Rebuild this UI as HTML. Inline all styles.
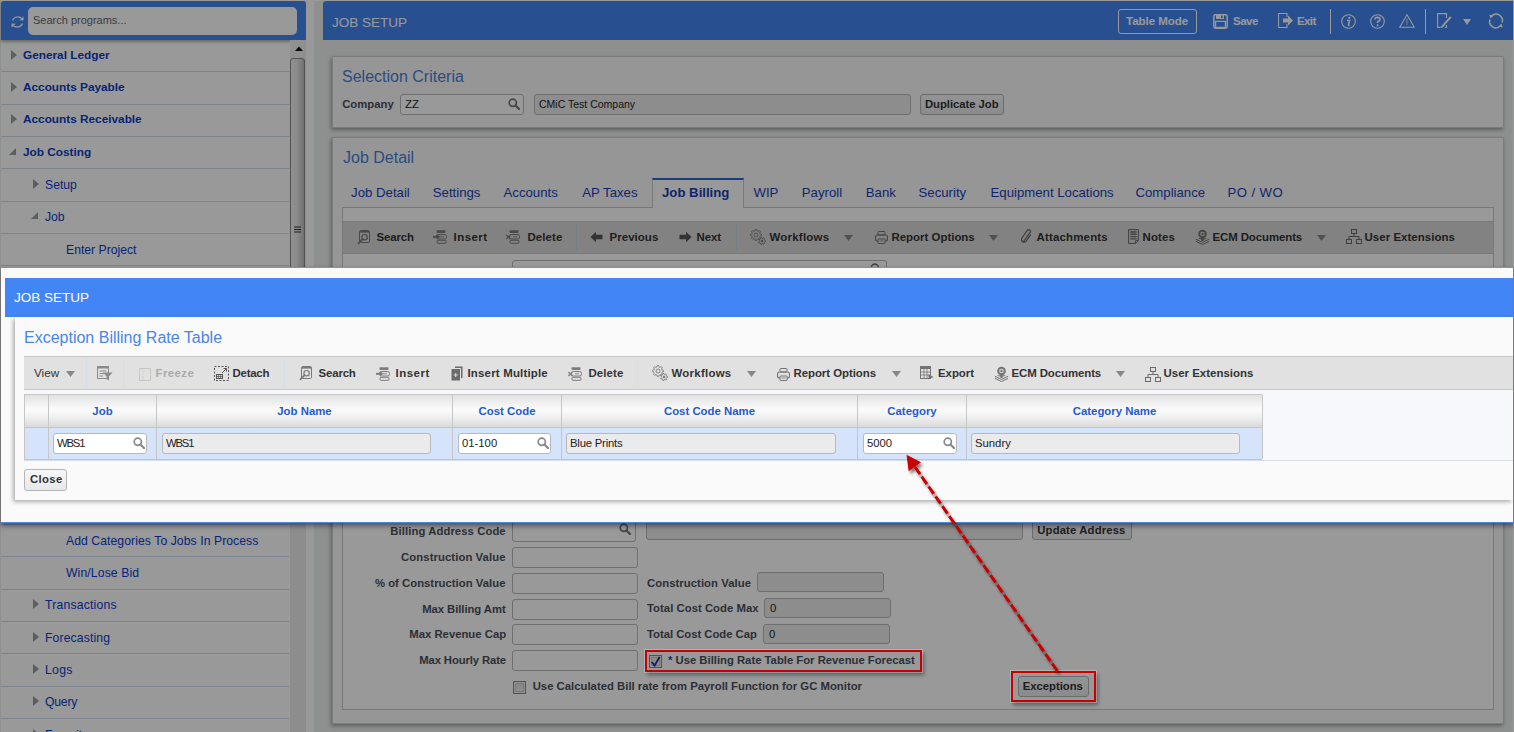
<!DOCTYPE html><html><head><meta charset="utf-8"><style>*{box-sizing:border-box;margin:0;padding:0}
html,body{width:1514px;height:732px;overflow:hidden;background:#edf0ef;font-family:"Liberation Sans",sans-serif;position:relative}
.a{position:absolute}
.t{position:absolute;white-space:nowrap;line-height:1}
.b{font-weight:bold}
#sbh{left:1px;top:1px;width:305px;height:39px;background:#4486f2;border-radius:3px 3px 0 0;box-shadow:0 2px 3px rgba(0,0,0,.3)}
#sbs{left:28px;top:7px;width:269px;height:28px;background:#fff;border-radius:5px}
#sbl{left:1px;top:40px;width:289px;height:692px;background:#fff;overflow:hidden}
.row{position:absolute;left:0;width:288px;border-bottom:1px solid #cddcf2}
.nav{color:#0b3cc9;font-size:12.2px}
.navb{color:#0b3cc9;font-size:11.8px;font-weight:bold}
.tri{position:absolute;width:0;height:0;border-top:5px solid transparent;border-bottom:5px solid transparent;border-left:6px solid #9a9ea2}
.trid{position:absolute;width:0;height:0;border-left:7px solid transparent;border-bottom:7px solid #9a9ea2}
#scr{left:290px;top:40px;width:16px;height:692px;background:#ececec}
#mh{left:323px;top:1px;width:1190px;height:39px;background:#4486f2;border-radius:3px 0 0 0}
.panel{position:absolute;background:#fbfbfb;border:1px solid #cfcfcf;box-shadow:-1px 2px 4px rgba(0,0,0,.35)}
.ptitle{color:#4a7fd6;font-size:16px}
.lbl{color:#4a505a;font-weight:bold;font-size:11.3px}
.inp{position:absolute;background:#fff;border:1px solid #b9b9b9;border-radius:3px}
.ro{background:#ebebeb}
.btn{position:absolute;background:linear-gradient(#f6f7f8,#e6e8eb);border:1px solid #b5b5b5;border-radius:3px;color:#333;font-weight:bold;font-size:11.2px}
.tab{color:#1a3fb5;font-size:13.2px}
.tbi{color:#333;font-weight:bold;font-size:11.45px}
.sep{position:absolute;width:1px;background:#cfd8e4}
#overlay{left:0;top:0;width:1514px;height:732px;background:rgba(0,0,0,.4)}
#modal{left:1px;top:267px;width:1513px;height:256px;background:#fafafa;border-top:1px solid #5b9af0;border-bottom:1px solid #4a86e8;border-right:1px solid #777;box-shadow:0 3px 5px rgba(0,0,0,.45)}
#mdh{left:4px;top:10px;width:1509px;height:39px;background:#4285f4}
.th{position:absolute;top:0;height:32px;border-right:1px solid #c6c6c6;background:linear-gradient(#e2e2e2 0%,#fbfbfb 45%,#f3f3f3 65%,#dadada 100%);color:#1f5bd0;font-weight:bold;font-size:11.4px}
.td{position:absolute;top:32px;height:32px;border-right:1px solid #c6c6c6;border-top:1px solid #c6c6c6;background:#d5e4fb}
</style></head><body>
<div id="sbl" class="a">
<div class="row" style="top:0px;height:32px">
<span class="t navb" style="left:22px;top:10px;letter-spacing:0px">General Ledger</span>
<div class="tri" style="left:10px;top:10px"></div>
</div>
<div class="row" style="top:32px;height:33px">
<span class="t navb" style="left:22px;top:10px;letter-spacing:0px">Accounts Payable</span>
<div class="tri" style="left:10px;top:10px"></div>
</div>
<div class="row" style="top:65px;height:32px">
<span class="t navb" style="left:22px;top:9px;letter-spacing:0px">Accounts Receivable</span>
<div class="tri" style="left:10px;top:9px"></div>
</div>
<div class="row" style="top:97px;height:32px">
<span class="t navb" style="left:22px;top:10px;letter-spacing:0px">Job Costing</span>
<div class="trid" style="left:8px;top:11px"></div>
</div>
<div class="row" style="top:129px;height:33px">
<span class="t nav" style="left:44px;top:10px;letter-spacing:0px">Setup</span>
<div class="tri" style="left:32px;top:10px"></div>
</div>
<div class="row" style="top:162px;height:32px">
<span class="t nav" style="left:44px;top:9px;letter-spacing:0px">Job</span>
<div class="trid" style="left:30px;top:10px"></div>
</div>
<div class="row" style="top:194px;height:32px">
<span class="t nav" style="left:65px;top:10px;letter-spacing:0px">Enter Project</span>
</div>
<div class="row" style="top:226px;height:33px">
<span class="t nav" style="left:65px;top:10px;letter-spacing:0px">Enter Job</span>
</div>
<div class="row" style="top:259px;height:32px">
<span class="t nav" style="left:65px;top:9px;letter-spacing:0px">Job Maintenance</span>
</div>
<div class="row" style="top:291px;height:32px">
<span class="t nav" style="left:65px;top:10px;letter-spacing:0px">Job Status</span>
</div>
<div class="row" style="top:323px;height:33px">
<span class="t nav" style="left:65px;top:10px;letter-spacing:0px">Job Budget</span>
</div>
<div class="row" style="top:356px;height:32px">
<span class="t nav" style="left:65px;top:9px;letter-spacing:0px">Job Forecast</span>
</div>
<div class="row" style="top:388px;height:32px">
<span class="t nav" style="left:65px;top:10px;letter-spacing:0px">Job Templates</span>
</div>
<div class="row" style="top:420px;height:33px">
<span class="t nav" style="left:65px;top:10px;letter-spacing:0px">Copy Job</span>
</div>
<div class="row" style="top:453px;height:32px">
<span class="t nav" style="left:65px;top:9px;letter-spacing:0px">Job Closeout</span>
</div>
<div class="row" style="top:485px;height:32px">
<span class="t nav" style="left:65px;top:10px;letter-spacing:0.07px">Add Categories To Jobs In Process</span>
</div>
<div class="row" style="top:517px;height:33px">
<span class="t nav" style="left:65px;top:10px;letter-spacing:0.12px">Win/Lose Bid</span>
</div>
<div class="row" style="top:550px;height:32px">
<span class="t nav" style="left:44px;top:9px;letter-spacing:0.2px">Transactions</span>
<div class="tri" style="left:32px;top:9px"></div>
</div>
<div class="row" style="top:582px;height:32px">
<span class="t nav" style="left:44px;top:10px;letter-spacing:0.13px">Forecasting</span>
<div class="tri" style="left:32px;top:10px"></div>
</div>
<div class="row" style="top:614px;height:33px">
<span class="t nav" style="left:44px;top:10px;letter-spacing:0.3px">Logs</span>
<div class="tri" style="left:32px;top:10px"></div>
</div>
<div class="row" style="top:647px;height:32px">
<span class="t nav" style="left:44px;top:9px;letter-spacing:-0.2px">Query</span>
<div class="tri" style="left:32px;top:9px"></div>
</div>
<div class="row" style="top:679px;height:32px">
<span class="t nav" style="left:44px;top:10px;letter-spacing:0px">Favorites</span>
<div class="tri" style="left:32px;top:10px"></div>
</div>
</div>
<div id="scr" class="a"></div>
<div id="sbh" class="a">
<svg class="a" style="left:9px;top:14px" width="15" height="14" viewBox="0 0 15 14"><path d="M2.5 5.5 A5.5 5 0 0 1 12.2 4" fill="none" stroke="#fff" stroke-width="1.2"/><path d="M13.5 1.5 L13.5 5.5 L9.5 5.2 Z" fill="#fff"/><path d="M12.5 8.5 A5.5 5 0 0 1 2.8 10" fill="none" stroke="#fff" stroke-width="1.2"/><path d="M1.5 12.5 L1.5 8.5 L5.5 8.8 Z" fill="#fff"/></svg>
</div>
<div id="sbs" class="a"><span class="t" style="left:5px;top:8px;font-size:11px;color:#666">Search programs...</span></div>
<div class="a" style="left:290px;top:40px;width:16px;height:18px;background:#f0f0f0"></div>
<svg class="a" style="left:295px;top:46px;" width="8" height="5" viewBox="0 0 8 5"><path d="M0 5 L4 0.5 L8 5 Z" fill="#111"/></svg>
<div class="a" style="left:290px;top:58px;width:15px;height:330px;border:1px solid #8a8a8a;border-radius:3px;background:linear-gradient(90deg,#f2f2f2 0%,#e8e8e8 45%,#bcbcbc 100%)"></div>
<svg class="a" style="left:294px;top:226px;" width="7" height="7" viewBox="0 0 7 7"><path d="M0 1 H7 M0 3.5 H7 M0 6 H7" stroke="#333" stroke-width="1.1"/></svg>
<div class="a" style="left:306px;top:0;width:8px;height:732px;background:#fff"></div>
<div class="a" style="left:0;top:0;width:1514px;height:1px;background:#fff"></div>
<div class="a" style="left:1513px;top:0;width:1px;height:732px;background:#fff"></div>
<div id="mh" class="a"><span class="t" style="left:9px;top:15px;font-size:13.5px;color:#fff">JOB SETUP</span></div>
<div class="a" style="left:1118px;top:9px;width:79px;height:25px;border:1px solid #fff;border-radius:3px"></div>
<span class="t b" style="left:1126px;top:16px;letter-spacing:-0.028px;font-size:11.5px;color:#fff">Table Mode</span>
<svg class="a" style="left:1213px;top:14px;" width="15" height="15" viewBox="0 0 15 15"><rect x="0.8" y="0.8" width="13.4" height="13.4" rx="1.6" fill="none" stroke="#fff" stroke-width="1.5"/><rect x="3" y="0.8" width="8" height="4.2" fill="#fff"/><rect x="8" y="1.6" width="1.6" height="2.4" fill="#4486f2"/><rect x="2.6" y="7.4" width="9.8" height="6" fill="none" stroke="#fff" stroke-width="1.2"/></svg>
<span class="t b" style="left:1233px;top:16px;letter-spacing:-0.519px;font-size:11.5px;color:#fff">Save</span>
<svg class="a" style="left:1278px;top:13px;" width="16" height="16" viewBox="0 0 16 16"><path d="M9 4 V0.5 H0.5 V14.5 H9 V11" fill="none" stroke="#fff" stroke-width="1.1"/><path d="M5 5.5 H10 V2.5 L15 7.5 L10 12.5 V9.5 H5 Z" fill="#fff"/></svg>
<span class="t b" style="left:1297px;top:16px;letter-spacing:-0.597px;font-size:11.5px;color:#fff">Exit</span>
<div class="a" style="left:1330px;top:9px;width:1px;height:25px;background:#fff"></div>
<svg class="a" style="left:1341px;top:14px;" width="15" height="15" viewBox="0 0 15 15"><circle cx="7.5" cy="7.5" r="6.8" fill="none" stroke="#fff" stroke-width="1.1"/><circle cx="8.3" cy="3.8" r="1.1" fill="#fff"/><path d="M6 6.5 H8.6 L7.4 11 Q7.3 11.6 8.6 11.2" fill="none" stroke="#fff" stroke-width="1.5"/></svg>
<svg class="a" style="left:1370px;top:14px;" width="15" height="15" viewBox="0 0 15 15"><circle cx="7.5" cy="7.5" r="6.8" fill="none" stroke="#fff" stroke-width="1.1"/><path d="M5 5.6 Q5 3.4 7.5 3.4 Q10 3.4 10 5.4 Q10 6.8 7.6 7.8 V9" fill="none" stroke="#fff" stroke-width="1.6"/><circle cx="7.6" cy="11.2" r="1" fill="#fff"/></svg>
<svg class="a" style="left:1399px;top:14px;" width="16" height="14" viewBox="0 0 16 14"><path d="M8 0.8 L15.3 13.3 H0.7 Z" fill="none" stroke="#fff" stroke-width="1.1"/><path d="M8 4.5 V11" stroke="#fff" stroke-width="0.7"/></svg>
<div class="a" style="left:1425px;top:9px;width:1px;height:25px;background:#fff"></div>
<svg class="a" style="left:1437px;top:13px;" width="15" height="16" viewBox="0 0 15 16"><path d="M9.5 5 V0.6 H0.6 V14.4 H3.5 M8 14.4 H9.5 V12" fill="none" stroke="#fff" stroke-width="1.1"/><path d="M4.3 14.6 L13.8 3.8" stroke="#fff" stroke-width="1.9"/></svg>
<svg class="a" style="left:1463px;top:19px;" width="8" height="6" viewBox="0 0 8 6"><path d="M0 0 H8 L4 6 Z" fill="#fff"/></svg>
<svg class="a" style="left:1488px;top:13px;" width="16" height="16" viewBox="0 0 16 16"><path d="M3.6 3.2 A6.2 6.2 0 0 1 14 9.5" fill="none" stroke="#fff" stroke-width="1.4"/><path d="M12.4 12.8 A6.2 6.2 0 0 1 2 6.5" fill="none" stroke="#fff" stroke-width="1.4"/><path d="M1.2 1.8 L5.5 2.2 L2.6 5.6 Z" fill="#fff"/><path d="M14.8 14.2 L10.5 13.8 L13.4 10.4 Z" fill="#fff"/></svg>
<div class="panel" style="left:332px;top:56px;width:1172px;height:72px"></div>
<span class="t ptitle" style="left:342px;top:69px;">Selection Criteria</span>
<span class="t lbl" style="left:342.2px;top:99px;letter-spacing:0.019px;">Company</span>
<div class="inp" style="left:400px;top:94px;width:124px;height:21px"></div>
<span class="t " style="left:405px;top:99px;font-size:11.5px;color:#222">ZZ</span>
<svg class="a" style="left:508px;top:98px;" width="12" height="12" viewBox="0 0 12 12"><circle cx="4.8" cy="4.8" r="3.6" fill="none" stroke="#777" stroke-width="1.7"/><path d="M7.5 7.5 L11 11" stroke="#777" stroke-width="2.2" stroke-linecap="round"/></svg>
<div class="inp ro" style="left:534px;top:94px;width:377px;height:21px"></div>
<span class="t " style="left:539px;top:98.5px;font-size:10.5px;color:#222">CMiC Test Company</span>
<div class="btn" style="left:920px;top:94px;width:84px;height:21px"></div>
<span class="t b" style="left:925px;top:99px;letter-spacing:-0.041px;font-size:11.3px;color:#333">Duplicate Job</span>
<div class="panel" style="left:332px;top:137px;width:1172px;height:587px"></div>
<span class="t ptitle" style="left:343px;top:150px;">Job Detail</span>
<div class="a" style="left:342px;top:207px;width:1152px;height:503px;border:1px solid #c8c8c8;background:#fff"></div>
<div class="a" style="left:652px;top:178px;width:92px;height:30px;border:1px solid #c8c8c8;border-top:2px solid #2a66cc;border-bottom:none;background:#fff"></div>
<span class="t tab" style="left:351.1px;top:186px;">Job Detail</span>
<span class="t tab" style="left:432.8px;top:186px;">Settings</span>
<span class="t tab" style="left:503.5px;top:186px;">Accounts</span>
<span class="t tab" style="left:582.3px;top:186px;">AP Taxes</span>
<span class="t tab b" style="left:662px;top:186px;font-size:13.2px">Job Billing</span>
<span class="t tab" style="left:753.5px;top:186px;">WIP</span>
<span class="t tab" style="left:801.8px;top:186px;">Payroll</span>
<span class="t tab" style="left:865.8px;top:186px;">Bank</span>
<span class="t tab" style="left:918.5px;top:186px;">Security</span>
<span class="t tab" style="left:990.5px;top:186px;">Equipment Locations</span>
<span class="t tab" style="left:1135.5px;top:186px;">Compliance</span>
<span class="t tab" style="left:1227.5px;top:186px;letter-spacing:0.4px">PO / WO</span>
<div class="a" style="left:343px;top:221px;width:1150px;height:33px;background:#d9d9d9;border-top:1px solid #cdcdcd;border-bottom:1px solid #cdcdcd"></div>
<svg class="a" style="left:357px;top:230px;" width="13" height="15" viewBox="0 0 13 15"><rect x="2.5" y="0.5" width="10" height="12" rx="1.2" fill="none" stroke="#7a7a7a" stroke-width="1"/><rect x="3" y="1" width="9" height="1.6" fill="#7a7a7a"/><circle cx="7.6" cy="7.2" r="2.7" fill="none" stroke="#7a7a7a" stroke-width="1.2"/><path d="M5.6 9.2 L1 13.8" stroke="#7a7a7a" stroke-width="1.8"/></svg>
<span class="t tbi" style="left:376.5px;top:232px;letter-spacing:-0.118px;">Search</span>
<svg class="a" style="left:433px;top:230px;" width="15" height="14" viewBox="0 0 15 14"><rect x="3.5" y="0.3" width="9" height="2.6" rx="0.8" fill="#7c7c7c"/><rect x="3.5" y="4.5" width="10" height="4.5" rx="1.8" fill="none" stroke="#7c7c7c" stroke-width="1"/><path d="M7 6.8 H11" stroke="#7c7c7c" stroke-width="0.9"/><rect x="4" y="10.3" width="9" height="3" rx="1" fill="none" stroke="#7c7c7c" stroke-width="1"/><path d="M0 6.8 H4.5" stroke="#7c7c7c" stroke-width="2"/><path d="M4 4 L7.2 6.8 L4 9.6 Z" fill="#7c7c7c"/></svg>
<span class="t tbi" style="left:453.5px;top:232px;letter-spacing:0.484px;">Insert</span>
<svg class="a" style="left:506px;top:230px;" width="15" height="14" viewBox="0 0 15 14"><rect x="3.5" y="0.3" width="9" height="2.6" rx="0.8" fill="#7c7c7c"/><rect x="3.5" y="4.5" width="10" height="4.5" rx="1.8" fill="none" stroke="#7c7c7c" stroke-width="1"/><path d="M7 6.8 H11" stroke="#7c7c7c" stroke-width="0.9"/><rect x="4" y="10.3" width="9" height="3" rx="1" fill="none" stroke="#7c7c7c" stroke-width="1"/><path d="M0.3 5 L4.3 9 M4.3 5 L0.3 9" stroke="#7c7c7c" stroke-width="1.2"/></svg>
<span class="t tbi" style="left:527.5px;top:232px;letter-spacing:0.087px;">Delete</span>
<div class="sep" style="left:576px;top:225px;height:25px;background:#c5d3e4"></div>
<svg class="a" style="left:590px;top:231px;" width="13" height="12" viewBox="0 0 13 12"><path d="M0.5 6 L6 0.8 L6 3.8 L12.5 3.8 L12.5 8.2 L6 8.2 L6 11.2 Z" fill="#555"/></svg>
<span class="t tbi" style="left:609.5px;top:232px;letter-spacing:0.062px;">Previous</span>
<svg class="a" style="left:679px;top:231px;" width="13" height="12" viewBox="0 0 13 12"><path d="M12.5 6 L7 0.8 L7 3.8 L0.5 3.8 L0.5 8.2 L7 8.2 L7 11.2 Z" fill="#555"/></svg>
<span class="t tbi" style="left:696.5px;top:232px;letter-spacing:-0.073px;">Next</span>
<div class="sep" style="left:736px;top:225px;height:25px;background:#c5d3e4"></div>
<svg class="a" style="left:750px;top:229px;" width="16" height="16" viewBox="0 0 16 16"><polygon points="11.46,5.31 11.46,6.69 10.05,7.11 9.65,8.08 10.35,9.37 9.37,10.35 8.08,9.65 7.11,10.05 6.69,11.46 5.31,11.46 4.89,10.05 3.92,9.65 2.63,10.35 1.65,9.37 2.35,8.08 1.95,7.11 0.54,6.69 0.54,5.31 1.95,4.89 2.35,3.92 1.65,2.63 2.63,1.65 3.92,2.35 4.89,1.95 5.31,0.54 6.69,0.54 7.11,1.95 8.08,2.35 9.37,1.65 10.35,2.63 9.65,3.92 10.05,4.89" fill="none" stroke="#7a7a7a" stroke-width="0.9"/><circle cx="6" cy="6" r="2" fill="none" stroke="#7a7a7a" stroke-width="0.9"/><polygon points="15.56,11.48 15.56,12.52 14.48,12.78 14.16,13.45 14.62,14.46 13.82,15.11 12.94,14.43 12.21,14.59 11.71,15.59 10.70,15.36 10.69,14.24 10.10,13.78 9.01,14.01 8.57,13.08 9.43,12.37 9.43,11.63 8.57,10.92 9.01,9.99 10.10,10.22 10.69,9.76 10.70,8.64 11.71,8.41 12.21,9.41 12.94,9.57 13.82,8.89 14.62,9.54 14.16,10.55 14.48,11.22" fill="none" stroke="#7a7a7a" stroke-width="0.9"/><circle cx="12" cy="12" r="1.2" fill="#7a7a7a"/></svg>
<span class="t tbi" style="left:769.5px;top:232px;letter-spacing:0.239px;">Workflows</span>
<svg class="a" style="left:844px;top:235px;" width="9" height="6" viewBox="0 0 9 6"><path d="M0 0 H9 L4.5 6 Z" fill="#888"/></svg>
<svg class="a" style="left:875px;top:231px;" width="13" height="13" viewBox="0 0 13 13"><rect x="3" y="0.5" width="7" height="3.5" rx="0.8" fill="none" stroke="#737373" stroke-width="1"/><rect x="0.5" y="4" width="12" height="6" rx="2" fill="none" stroke="#737373" stroke-width="1.1"/><rect x="3" y="8" width="7" height="4.5" rx="0.5" fill="#e4e4e4" stroke="#737373" stroke-width="1"/><path d="M4.5 10 H8.5" stroke="#737373" stroke-width="0.8"/></svg>
<span class="t tbi" style="left:891.5px;top:232px;letter-spacing:-0.002px;">Report Options</span>
<svg class="a" style="left:989px;top:235px;" width="9" height="6" viewBox="0 0 9 6"><path d="M0 0 H9 L4.5 6 Z" fill="#888"/></svg>
<svg class="a" style="left:1021px;top:229px;" width="11" height="15" viewBox="0 0 11 15"><path d="M2.2 13.2 L9.3 3.2 A1.8 1.8 0 0 0 6.4 1.2 L1 9 A2.6 2.6 0 0 0 5.3 12 L9.8 5.6" fill="none" stroke="#6b6b6b" stroke-width="1.3"/></svg>
<span class="t tbi" style="left:1036.5px;top:232px;letter-spacing:0.195px;">Attachments</span>
<svg class="a" style="left:1128px;top:229px;" width="12" height="15" viewBox="0 0 12 15"><path d="M0.6 0.6 H10.4 V11.5 L7.5 14.4 H0.6 Z" fill="none" stroke="#6b6b6b" stroke-width="1"/><path d="M7.5 14.4 V11.5 H10.4" fill="none" stroke="#6b6b6b" stroke-width="0.9"/><path d="M2.3 3 H8.7 M2.3 5.3 H8.7 M2.3 7.6 H8.7 M2.3 9.9 H8.7" stroke="#6b6b6b" stroke-width="1.4"/></svg>
<span class="t tbi" style="left:1142.5px;top:232px;letter-spacing:0.147px;">Notes</span>
<svg class="a" style="left:1195px;top:229px;" width="15" height="16" viewBox="0 0 15 16"><path d="M0.8 10.2 L7.5 13.4 L14.2 10.2 M0.8 12.3 L7.5 15.5 L14.2 12.3" fill="none" stroke="#737373" stroke-width="1"/><path d="M3 9.5 L7.5 11.6 L12 9.5 L7.5 7.5 Z" fill="#737373" opacity=".7"/><circle cx="7.5" cy="5" r="4.3" fill="#737373"/><circle cx="7.5" cy="5" r="2.3" fill="#dedede"/><circle cx="7.5" cy="5" r="1.2" fill="#737373"/><rect x="6.5" y="8.5" width="2" height="3.5" fill="#737373"/></svg>
<span class="t tbi" style="left:1212.5px;top:232px;letter-spacing:-0.098px;">ECM Documents</span>
<svg class="a" style="left:1317px;top:235px;" width="9" height="6" viewBox="0 0 9 6"><path d="M0 0 H9 L4.5 6 Z" fill="#888"/></svg>
<svg class="a" style="left:1346px;top:229px;" width="16" height="15" viewBox="0 0 16 15"><rect x="5.5" y="0.5" width="5" height="4" fill="none" stroke="#6b6b6b" stroke-width="1"/><path d="M8 4.5 V7.5 M3 7.5 H13 M3 7.5 V10 M13 7.5 V10" stroke="#6b6b6b" stroke-width="1" fill="none"/><rect x="0.5" y="10.5" width="5" height="4" fill="none" stroke="#6b6b6b" stroke-width="1"/><rect x="10.5" y="10.5" width="5" height="4" fill="none" stroke="#6b6b6b" stroke-width="1"/></svg>
<span class="t tbi" style="left:1364.5px;top:232px;letter-spacing:0.055px;">User Extensions</span>
<div class="inp" style="left:512px;top:260px;width:375px;height:21px"></div>
<svg class="a" style="left:870px;top:263px;" width="12" height="12" viewBox="0 0 12 12"><circle cx="4.8" cy="4.8" r="3.6" fill="none" stroke="#777" stroke-width="1.7"/><path d="M7.5 7.5 L11 11" stroke="#777" stroke-width="2.2" stroke-linecap="round"/></svg>
<span class="t lbl" style="left:390.3px;top:525.5px;letter-spacing:0.081px;">Billing Address Code</span>
<div class="inp" style="left:512px;top:520.5px;width:124px;height:21px"></div>
<span class="t lbl" style="left:401.1px;top:551.6px;letter-spacing:0.083px;">Construction Value</span>
<div class="inp" style="left:512px;top:546.6px;width:126px;height:21px"></div>
<span class="t lbl" style="left:374.9px;top:577.8px;letter-spacing:0.028px;">% of Construction Value</span>
<div class="inp" style="left:512px;top:572.8px;width:126px;height:21px"></div>
<span class="t lbl" style="left:422.2px;top:603.5px;letter-spacing:-0.061px;">Max Billing Amt</span>
<div class="inp" style="left:512px;top:598.5px;width:126px;height:21px"></div>
<span class="t lbl" style="left:409.3px;top:629.4px;letter-spacing:0.006px;">Max Revenue Cap</span>
<div class="inp" style="left:512px;top:624.4px;width:126px;height:21px"></div>
<span class="t lbl" style="left:419.2px;top:655.3px;letter-spacing:-0.117px;">Max Hourly Rate</span>
<div class="inp" style="left:512px;top:650.3px;width:126px;height:21px"></div>
<svg class="a" style="left:619px;top:523px;" width="12" height="12" viewBox="0 0 12 12"><circle cx="4.8" cy="4.8" r="3.6" fill="none" stroke="#777" stroke-width="1.7"/><path d="M7.5 7.5 L11 11" stroke="#777" stroke-width="2.2" stroke-linecap="round"/></svg>
<div class="inp ro" style="left:646px;top:520px;width:377px;height:20px"></div>
<div class="btn" style="left:1032px;top:520px;width:100px;height:20px"></div>
<span class="t b" style="left:1037.3px;top:525px;letter-spacing:0.142px;font-size:11.3px;color:#333">Update Address</span>
<span class="t lbl" style="left:647px;top:578px;letter-spacing:0.059px;">Construction Value</span>
<div class="inp ro" style="left:757px;top:572px;width:127px;height:20px"></div>
<span class="t lbl" style="left:647px;top:603px;letter-spacing:0.036px;">Total Cost Code Max</span>
<div class="inp ro" style="left:764px;top:598px;width:127px;height:20px"></div>
<span class="t " style="left:770px;top:603px;font-size:11.3px;color:#222">0</span>
<span class="t lbl" style="left:647px;top:629px;letter-spacing:-0.018px;">Total Cost Code Cap</span>
<div class="inp ro" style="left:763px;top:624px;width:127px;height:20px"></div>
<span class="t " style="left:769px;top:629px;font-size:11.3px;color:#222">0</span>
<div class="a" style="left:649px;top:655px;width:13px;height:13px;border:1px solid #8a8a8a;box-shadow:inset 0 0 0 1px #f4f4f4,inset 0 0 0 2px #c8c8c8;background:linear-gradient(#e4e4e4,#f4f4f4)"></div>
<svg class="a" style="left:650px;top:656px;" width="11" height="11" viewBox="0 0 11 11"><path d="M2.3 6.5 L4.6 9.6 L9.3 1.6" fill="none" stroke="#1e3c9c" stroke-width="1.9" stroke-linecap="round"/></svg>
<span class="t lbl" style="left:668px;top:655px;letter-spacing:-0.006px;"><span style="color:#2a4fc0">*</span> Use Billing Rate Table For Revenue Forecast</span>
<div class="a" style="left:513px;top:681px;width:13px;height:13px;border:1px solid #8a8a8a;box-shadow:inset 0 0 0 1px #f4f4f4,inset 0 0 0 2px #c8c8c8;background:linear-gradient(#d8d8d8,#f4f4f4)"></div>
<span class="t lbl" style="left:532.7px;top:681px;letter-spacing:0.017px;">Use Calculated Bill rate from Payroll Function for GC Monitor</span>
<div class="btn" style="left:1018px;top:676px;width:71px;height:21px"></div>
<span class="t b" style="left:1022.8px;top:681px;letter-spacing:-0.032px;font-size:11.3px;color:#333">Exceptions</span>
<div id="overlay" class="a"></div>
<div id="modal" class="a"><div id="mdh" class="a"><span class="t" style="left:9px;top:13px;font-size:13.5px;color:#fff">JOB SETUP</span></div></div>
<div class="a" style="left:15px;top:317px;width:1498px;height:183px;background:#fafafa;box-shadow:-2px 2px 4px rgba(0,0,0,.3)"></div>
<span class="t " style="left:24px;top:330px;font-size:16px;color:#4a86e8">Exception Billing Rate Table</span>
<div class="a" style="left:24px;top:356px;width:1489px;height:34px;background:#e1e1e1;border-top:1px solid #c9c9c9;border-bottom:1px solid #c9c9c9"></div>
<span class="t " style="left:34px;top:367px;font-size:11.7px;color:#333">View</span>
<svg class="a" style="left:66px;top:371px;" width="9" height="6" viewBox="0 0 9 6"><path d="M0 0 H9 L4.5 6 Z" fill="#888"/></svg>
<div class="sep" style="left:86px;top:357px;height:32px;background:#d3dfec"></div>
<svg class="a" style="left:97px;top:366px;" width="16" height="15" viewBox="0 0 16 15"><rect x="0.5" y="0.5" width="11" height="12" fill="none" stroke="#8a8a8a" stroke-width="1"/><rect x="0.5" y="0.5" width="11" height="2" fill="#8a8a8a"/><path d="M2.5 5 H9.5 M2.5 7.5 H7 M2.5 10 H6" stroke="#8a8a8a" stroke-width="1"/><path d="M6 6.5 H15.5 L11.8 10.5 V14.5 L9.7 13 V10.5 Z" fill="#8a8a8a"/></svg>
<div class="sep" style="left:123px;top:360px;height:27px;background:#d3dfec"></div>
<svg class="a" style="left:139px;top:368px;" width="12" height="13" viewBox="0 0 12 13"><rect x="0.5" y="0.5" width="11" height="12" fill="none" stroke="#c8c8c8" stroke-width="1"/><path d="M4 0.5 V12.5" stroke="#c8c8c8" stroke-width="1" stroke-dasharray="1.5 1"/></svg>
<span class="t tbi" style="left:155.5px;top:368px;letter-spacing:0.404px;color:#aaa">Freeze</span>
<svg class="a" style="left:214px;top:366px;" width="15" height="15" viewBox="0 0 15 15"><rect x="0.5" y="0.5" width="14" height="14" fill="none" stroke="#555" stroke-width="1" stroke-dasharray="2 1.5"/><path d="M8 7 L12.5 2.5 M9.5 2.5 H12.5 V5.5" stroke="#555" stroke-width="1" fill="none"/><rect x="2.5" y="8.5" width="6" height="4" fill="none" stroke="#555" stroke-width="1"/><path d="M2.5 10.5 H8.5 M4.5 8.5 V12.5 M6.5 8.5 V12.5" stroke="#555" stroke-width="0.7"/></svg>
<span class="t tbi" style="left:232.5px;top:368px;letter-spacing:-0.236px;">Detach</span>
<div class="sep" style="left:284px;top:360px;height:27px;background:#d3dfec"></div>
<svg class="a" style="left:299px;top:366px;" width="13" height="15" viewBox="0 0 13 15"><rect x="2.5" y="0.5" width="10" height="12" rx="1.2" fill="none" stroke="#7a7a7a" stroke-width="1"/><rect x="3" y="1" width="9" height="1.6" fill="#7a7a7a"/><circle cx="7.6" cy="7.2" r="2.7" fill="none" stroke="#7a7a7a" stroke-width="1.2"/><path d="M5.6 9.2 L1 13.8" stroke="#7a7a7a" stroke-width="1.8"/></svg>
<span class="t tbi" style="left:318.5px;top:368px;letter-spacing:-0.158px;">Search</span>
<svg class="a" style="left:376px;top:367px;" width="15" height="14" viewBox="0 0 15 14"><rect x="3.5" y="0.3" width="9" height="2.6" rx="0.8" fill="#7c7c7c"/><rect x="3.5" y="4.5" width="10" height="4.5" rx="1.8" fill="none" stroke="#7c7c7c" stroke-width="1"/><path d="M7 6.8 H11" stroke="#7c7c7c" stroke-width="0.9"/><rect x="4" y="10.3" width="9" height="3" rx="1" fill="none" stroke="#7c7c7c" stroke-width="1"/><path d="M0 6.8 H4.5" stroke="#7c7c7c" stroke-width="2"/><path d="M4 4 L7.2 6.8 L4 9.6 Z" fill="#7c7c7c"/></svg>
<span class="t tbi" style="left:395.5px;top:368px;letter-spacing:0.524px;">Insert</span>
<svg class="a" style="left:451px;top:366px;" width="12" height="15" viewBox="0 0 12 15"><path d="M4 0.5 H11.5 V12 H10 V2 H4 Z" fill="#6b6b6b"/><path d="M0.5 3 H9 V14.5 H0.5 Z" fill="#6b6b6b"/><path d="M4.7 7 V11 M2.7 9 H6.7" stroke="#ddd" stroke-width="1"/></svg>
<span class="t tbi" style="left:467.5px;top:368px;letter-spacing:0.192px;">Insert Multiple</span>
<svg class="a" style="left:568px;top:367px;" width="15" height="14" viewBox="0 0 15 14"><rect x="3.5" y="0.3" width="9" height="2.6" rx="0.8" fill="#7c7c7c"/><rect x="3.5" y="4.5" width="10" height="4.5" rx="1.8" fill="none" stroke="#7c7c7c" stroke-width="1"/><path d="M7 6.8 H11" stroke="#7c7c7c" stroke-width="0.9"/><rect x="4" y="10.3" width="9" height="3" rx="1" fill="none" stroke="#7c7c7c" stroke-width="1"/><path d="M0.3 5 L4.3 9 M4.3 5 L0.3 9" stroke="#7c7c7c" stroke-width="1.2"/></svg>
<span class="t tbi" style="left:588.5px;top:368px;letter-spacing:0.107px;">Delete</span>
<div class="sep" style="left:637px;top:360px;height:27px;background:#d3dfec"></div>
<svg class="a" style="left:652px;top:365px;" width="16" height="16" viewBox="0 0 16 16"><polygon points="11.46,5.31 11.46,6.69 10.05,7.11 9.65,8.08 10.35,9.37 9.37,10.35 8.08,9.65 7.11,10.05 6.69,11.46 5.31,11.46 4.89,10.05 3.92,9.65 2.63,10.35 1.65,9.37 2.35,8.08 1.95,7.11 0.54,6.69 0.54,5.31 1.95,4.89 2.35,3.92 1.65,2.63 2.63,1.65 3.92,2.35 4.89,1.95 5.31,0.54 6.69,0.54 7.11,1.95 8.08,2.35 9.37,1.65 10.35,2.63 9.65,3.92 10.05,4.89" fill="none" stroke="#7a7a7a" stroke-width="0.9"/><circle cx="6" cy="6" r="2" fill="none" stroke="#7a7a7a" stroke-width="0.9"/><polygon points="15.56,11.48 15.56,12.52 14.48,12.78 14.16,13.45 14.62,14.46 13.82,15.11 12.94,14.43 12.21,14.59 11.71,15.59 10.70,15.36 10.69,14.24 10.10,13.78 9.01,14.01 8.57,13.08 9.43,12.37 9.43,11.63 8.57,10.92 9.01,9.99 10.10,10.22 10.69,9.76 10.70,8.64 11.71,8.41 12.21,9.41 12.94,9.57 13.82,8.89 14.62,9.54 14.16,10.55 14.48,11.22" fill="none" stroke="#7a7a7a" stroke-width="0.9"/><circle cx="12" cy="12" r="1.2" fill="#7a7a7a"/></svg>
<span class="t tbi" style="left:671.5px;top:368px;letter-spacing:0.264px;">Workflows</span>
<svg class="a" style="left:747px;top:371px;" width="9" height="6" viewBox="0 0 9 6"><path d="M0 0 H9 L4.5 6 Z" fill="#888"/></svg>
<svg class="a" style="left:777px;top:368px;" width="13" height="13" viewBox="0 0 13 13"><rect x="3" y="0.5" width="7" height="3.5" rx="0.8" fill="none" stroke="#737373" stroke-width="1"/><rect x="0.5" y="4" width="12" height="6" rx="2" fill="none" stroke="#737373" stroke-width="1.1"/><rect x="3" y="8" width="7" height="4.5" rx="0.5" fill="#e4e4e4" stroke="#737373" stroke-width="1"/><path d="M4.5 10 H8.5" stroke="#737373" stroke-width="0.8"/></svg>
<span class="t tbi" style="left:793.5px;top:368px;letter-spacing:-0.056px;">Report Options</span>
<svg class="a" style="left:892px;top:371px;" width="9" height="6" viewBox="0 0 9 6"><path d="M0 0 H9 L4.5 6 Z" fill="#888"/></svg>
<svg class="a" style="left:920px;top:366px;" width="14" height="14" viewBox="0 0 14 14"><rect x="0.5" y="0.5" width="10" height="12" fill="none" stroke="#737373" stroke-width="1"/><rect x="0.5" y="0.5" width="10" height="2.5" fill="#737373"/><path d="M0.5 6 H10.5 M0.5 9 H10.5 M4 0.5 V12.5 M7 0.5 V12.5" stroke="#737373" stroke-width="0.8"/><path d="M8.5 8.5 L13.5 11 L8.5 13.5 Z" fill="#737373"/></svg>
<span class="t tbi" style="left:938.0px;top:368px;letter-spacing:-0.052px;">Export</span>
<svg class="a" style="left:994px;top:366px;" width="15" height="16" viewBox="0 0 15 16"><path d="M0.8 10.2 L7.5 13.4 L14.2 10.2 M0.8 12.3 L7.5 15.5 L14.2 12.3" fill="none" stroke="#737373" stroke-width="1"/><path d="M3 9.5 L7.5 11.6 L12 9.5 L7.5 7.5 Z" fill="#737373" opacity=".7"/><circle cx="7.5" cy="5" r="4.3" fill="#737373"/><circle cx="7.5" cy="5" r="2.3" fill="#dedede"/><circle cx="7.5" cy="5" r="1.2" fill="#737373"/><rect x="6.5" y="8.5" width="2" height="3.5" fill="#737373"/></svg>
<span class="t tbi" style="left:1011.5px;top:368px;letter-spacing:-0.098px;">ECM Documents</span>
<svg class="a" style="left:1116px;top:371px;" width="9" height="6" viewBox="0 0 9 6"><path d="M0 0 H9 L4.5 6 Z" fill="#888"/></svg>
<svg class="a" style="left:1145px;top:367px;" width="16" height="15" viewBox="0 0 16 15"><rect x="5.5" y="0.5" width="5" height="4" fill="none" stroke="#6b6b6b" stroke-width="1"/><path d="M8 4.5 V7.5 M3 7.5 H13 M3 7.5 V10 M13 7.5 V10" stroke="#6b6b6b" stroke-width="1" fill="none"/><rect x="0.5" y="10.5" width="5" height="4" fill="none" stroke="#6b6b6b" stroke-width="1"/><rect x="10.5" y="10.5" width="5" height="4" fill="none" stroke="#6b6b6b" stroke-width="1"/></svg>
<span class="t tbi" style="left:1163.5px;top:368px;letter-spacing:0.019px;">User Extensions</span>
<div class="a" style="left:24px;top:390px;width:1489px;height:71px;background:#f6f8fc;border-bottom:1px solid #d6dde8"></div>
<div class="a" style="left:24px;top:394px;width:1238px;height:66px;border-top:1px solid #c6c6c6;border-left:1px solid #c6c6c6;border-bottom:1px solid #c6c6c6">
<div class="th" style="left:0px;width:24px"><span style="display:block;text-align:center;line-height:32px"></span></div>
<div class="td" style="left:0px;width:24px"></div>
<div class="th" style="left:24px;width:108px"><span style="display:block;text-align:center;line-height:32px">Job</span></div>
<div class="td" style="left:24px;width:108px"></div>
<div class="th" style="left:132px;width:296px"><span style="display:block;text-align:center;line-height:32px">Job Name</span></div>
<div class="td" style="left:132px;width:296px"></div>
<div class="th" style="left:428px;width:109px"><span style="display:block;text-align:center;line-height:32px">Cost Code</span></div>
<div class="td" style="left:428px;width:109px"></div>
<div class="th" style="left:537px;width:296px"><span style="display:block;text-align:center;line-height:32px">Cost Code Name</span></div>
<div class="td" style="left:537px;width:296px"></div>
<div class="th" style="left:833px;width:109px"><span style="display:block;text-align:center;line-height:32px">Category</span></div>
<div class="td" style="left:833px;width:109px"></div>
<div class="th" style="left:942px;width:296px"><span style="display:block;text-align:center;line-height:32px">Category Name</span></div>
<div class="td" style="left:942px;width:296px"></div>
</div>
<div class="inp" style="left:53px;top:433px;width:94px;height:21px"></div>
<span class="t " style="left:57px;top:438px;font-size:11.3px;color:#222;letter-spacing:-1.2px">WBS1</span>
<svg class="a" style="left:133px;top:437px;" width="12" height="12" viewBox="0 0 12 12"><circle cx="4.8" cy="4.8" r="3.6" fill="none" stroke="#888" stroke-width="1.7"/><path d="M7.5 7.5 L11 11" stroke="#888" stroke-width="2.2" stroke-linecap="round"/></svg>
<div class="inp ro" style="left:162px;top:433px;width:269px;height:21px"></div>
<span class="t " style="left:166px;top:438px;font-size:11.3px;color:#222;letter-spacing:-1.2px">WBS1</span>
<div class="inp" style="left:458px;top:433px;width:93px;height:21px"></div>
<span class="t " style="left:462px;top:438px;font-size:11.3px;color:#222;letter-spacing:0px">01-100</span>
<svg class="a" style="left:537px;top:437px;" width="12" height="12" viewBox="0 0 12 12"><circle cx="4.8" cy="4.8" r="3.6" fill="none" stroke="#888" stroke-width="1.7"/><path d="M7.5 7.5 L11 11" stroke="#888" stroke-width="2.2" stroke-linecap="round"/></svg>
<div class="inp ro" style="left:566px;top:433px;width:270px;height:21px"></div>
<span class="t " style="left:570px;top:438px;font-size:11.3px;color:#222;letter-spacing:-0.2px">Blue Prints</span>
<div class="inp" style="left:863px;top:433px;width:94px;height:21px"></div>
<span class="t " style="left:867px;top:438px;font-size:11.3px;color:#222;letter-spacing:0px">5000</span>
<svg class="a" style="left:943px;top:437px;" width="12" height="12" viewBox="0 0 12 12"><circle cx="4.8" cy="4.8" r="3.6" fill="none" stroke="#888" stroke-width="1.7"/><path d="M7.5 7.5 L11 11" stroke="#888" stroke-width="2.2" stroke-linecap="round"/></svg>
<div class="inp ro" style="left:971px;top:433px;width:269px;height:21px"></div>
<span class="t " style="left:975px;top:438px;font-size:11.3px;color:#222;letter-spacing:0px">Sundry</span>
<div class="btn" style="left:24px;top:469px;width:43px;height:22px"></div>
<span class="t b" style="left:30px;top:474px;letter-spacing:0.357px;font-size:11.3px;color:#333">Close</span>
<div class="a" style="left:1513px;top:268px;width:1px;height:254px;background:#7a7a7a"></div>
<div class="a" style="left:645px;top:650px;width:277px;height:22px;border:2px solid #c80000;box-shadow:0 0 0 1px rgba(230,240,245,.35),2px 3px 4px rgba(0,0,0,.4)"></div>
<div class="a" style="left:1011px;top:671px;width:85px;height:31px;border:2px solid #c80000;box-shadow:0 0 0 1px rgba(230,240,245,.35),2px 3px 4px rgba(0,0,0,.4)"></div>
<svg class="a" style="left:0;top:0" width="1514" height="732"><defs><filter id="sh" x="-20%" y="-20%" width="140%" height="140%"><feGaussianBlur in="SourceAlpha" stdDeviation="1.5"/><feOffset dx="2" dy="3"/><feComponentTransfer><feFuncA type="linear" slope=".5"/></feComponentTransfer><feMerge><feMergeNode/><feMergeNode in="SourceGraphic"/></feMerge></filter></defs>
<g filter="url(#sh)"><path d="M1057.4 671 L915 467" stroke="#c80000" stroke-width="3" stroke-dasharray="9 3" fill="none"/><path d="M906.5 454.8 L921 462.2 L908.7 471.2 Z" fill="#c80000"/></g></svg>
</body></html>
